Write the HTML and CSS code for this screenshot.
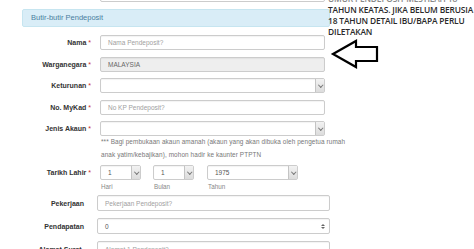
FILE: index.html
```html
<!DOCTYPE html>
<html lang="ms">
<head>
    <meta charset="UTF-8">
    <meta name="viewport" content="width=device-width, initial-scale=1.0">
    <title>Butir-butir Pendeposit</title>
    <link rel="stylesheet" href="styles.css">
</head>
<body>
    <div class="page">
        <div class="form-col">
            <div class="row">
                <span class="label"></span>
                <div class="form-control"></div>
            </div>

            <div class="panel-heading">Butir-butir Pendeposit</div>

            <div class="row">
                <label class="label">Nama <span class="req">*</span></label>
                <div class="form-control placeholder">Nama Pendeposit?</div>
            </div>
            <div class="row">
                <label class="label">Warganegara <span class="req">*</span></label>
                <div class="form-control disabled">MALAYSIA</div>
            </div>
            <div class="row">
                <label class="label">Keturunan <span class="req">*</span></label>
                <div class="form-control select"><span class="value"></span><span class="caret"></span></div>
            </div>
            <div class="row">
                <label class="label">No. MyKad <span class="req">*</span></label>
                <div class="form-control placeholder">No KP Pendeposit?</div>
            </div>
            <div class="row">
                <label class="label">Jenis Akaun <span class="req">*</span></label>
                <div class="form-control select"><span class="value"></span><span class="caret"></span></div>
            </div>
            <div class="help-row">
                <span class="label"></span>
                <p class="help">*** Bagi pembukaan akaun amanah (akaun yang akan dibuka oleh pengetua rumah<br>anak yatim/kebajikan), mohon hadir ke kaunter PTPTN</p>
            </div>

            <div class="row row-date">
                <label class="label">Tarikh Lahir <span class="req">*</span></label>
                <div class="date-group">
                    <div class="date-part day">
                        <div class="form-control select"><span class="value">1</span><span class="caret"></span></div>
                        <span class="sub">Hari</span>
                    </div>
                    <div class="date-part month">
                        <div class="form-control select"><span class="value">1</span><span class="caret"></span></div>
                        <span class="sub">Bulan</span>
                    </div>
                    <div class="date-part year">
                        <div class="form-control select"><span class="value">1975</span><span class="caret"></span></div>
                        <span class="sub">Tahun</span>
                    </div>
                </div>
            </div>

            <div class="row row-wide">
                <label class="label">Pekerjaan</label>
                <div class="form-control placeholder">Pekerjaan Pendeposit?</div>
            </div>
            <div class="row row-wide">
                <label class="label">Pendapatan</label>
                <div class="form-control number"><span class="value">0</span><span class="spin"><i class="up"></i><i class="down"></i></span></div>
            </div>
            <div class="row row-wide">
                <label class="label">Alamat Surat-</label>
                <div class="form-control placeholder">Alamat 1 Pendeposit?</div>
            </div>
        </div>

        <div class="side">
            <p class="notice"><span class="cut">UMUR PENDEPOSIT MESTILAH 18</span><br>TAHUN KEATAS. JIKA BELUM BERUSIA<br>18 TAHUN DETAIL IBU/BAPA PERLU<br>DILETAKAN</p>
            <svg class="arrow" width="50" height="30" viewBox="0 0 50 30">
                <polygon points="3,15 26,2 26,8 47,8 47,22 26,22 26,28" fill="#fff" stroke="#000" stroke-width="2.2" stroke-linejoin="miter"/>
            </svg>
        </div>
    </div>
</body>
</html>
```

FILE: styles.css
```css
body {
    margin: 0;
    background: #fff;
    font-family: "Liberation Sans", Arial, sans-serif;
    color: #333;
    overflow: hidden;
}
.page {
    display: flex;
    margin-top: -12px;
}
.form-col {
    width: 308px;
    padding-left: 22px;
    flex-shrink: 0;
}
.row {
    display: flex;
    align-items: center;
    height: 15px;
    margin-bottom: 6.5px;
}
.row:first-child {
    height: 14px;
    margin-bottom: 7px;
}
.label {
    width: 78px;
    padding-right: 9px;
    box-sizing: border-box;
    text-align: right;
    font-size: 7px;
    font-weight: bold;
    color: #333;
    flex-shrink: 0;
}
.req {
    color: #c9302c;
    font-weight: normal;
}
.form-control {
    width: 225px;
    height: 100%;
    box-sizing: border-box;
    border: 1px solid #ccc;
    border-radius: 2px;
    background: #fff;
    font-size: 6.5px;
    color: #555;
    padding: 0 7px;
    display: flex;
    align-items: center;
    box-shadow: inset 0 1px 1px rgba(0, 0, 0, 0.05);
}
.placeholder {
    color: #a0a0a0;
}
.disabled {
    background: #eee;
    color: #666;
}
.panel-heading {
    height: 18px;
    box-sizing: border-box;
    background: #d9edf7;
    border: 1px solid #c6e5f0;
    border-radius: 2px;
    color: #4a7fa0;
    font-size: 7.5px;
    line-height: 16px;
    padding-left: 8px;
    margin-bottom: 8px;
}
.select {
    padding-right: 0;
    justify-content: space-between;
}
.caret {
    width: 9px;
    height: 100%;
    box-sizing: border-box;
    border-left: 1px solid #c4c4c4;
    background: linear-gradient(#f2f2f2, #dcdcdc);
    position: relative;
}
.caret::after {
    content: "";
    position: absolute;
    left: 2.5px;
    top: 4px;
    width: 2.5px;
    height: 2.5px;
    border-right: 1px solid #777;
    border-bottom: 1px solid #777;
    transform: rotate(45deg);
}
.help-row {
    display: flex;
    margin-top: -6.5px;
}
.help {
    margin: 0;
    padding-left: 1px;
    font-size: 6.4px;
    line-height: 12.5px;
    color: #777;
    white-space: nowrap;
    letter-spacing: 0.1px;
}
.row-date {
    height: auto;
    align-items: flex-start;
    margin-top: 4px;
    margin-bottom: 1px;
}
.row-date .label {
    line-height: 15px;
}
.date-group {
    display: flex;
}
.date-part {
    display: flex;
    flex-direction: column;
}
.date-part .form-control {
    height: 15px;
    width: 100%;
}
.day,
.month {
    width: 41px;
    margin-right: 12px;
}
.month {
    margin-right: 13px;
}
.year {
    width: 91px;
}
.sub {
    font-size: 6.3px;
    line-height: 14px;
    padding-left: 1px;
    color: #888;
}
.row-wide {
    height: 16px;
    margin-bottom: 7px;
}
.row-wide .label {
    width: 75px;
    padding-right: 13px;
}
.row-wide .form-control {
    width: 234px;
}
.number {
    justify-content: space-between;
    padding-right: 4px;
}
.spin {
    display: flex;
    flex-direction: column;
    gap: 1px;
}
.spin i {
    width: 0;
    height: 0;
    border-left: 2px solid transparent;
    border-right: 2px solid transparent;
}
.spin .up {
    border-bottom: 2.5px solid #666;
}
.spin .down {
    border-top: 2.5px solid #666;
}
.side {
    padding-top: 4.5px;
    margin-left: -2px;
}
.notice {
    margin: 0;
    font-family: "Open Sans", "Liberation Sans", sans-serif;
    font-size: 8.4px;
    font-weight: 600;
    line-height: 11px;
    color: #2a2a2a;
    white-space: nowrap;
    letter-spacing: -0.15px;
}
.cut {
    color: #888;
}
.arrow {
    display: block;
    margin-top: 2px;
    margin-left: 2px;
}
```
